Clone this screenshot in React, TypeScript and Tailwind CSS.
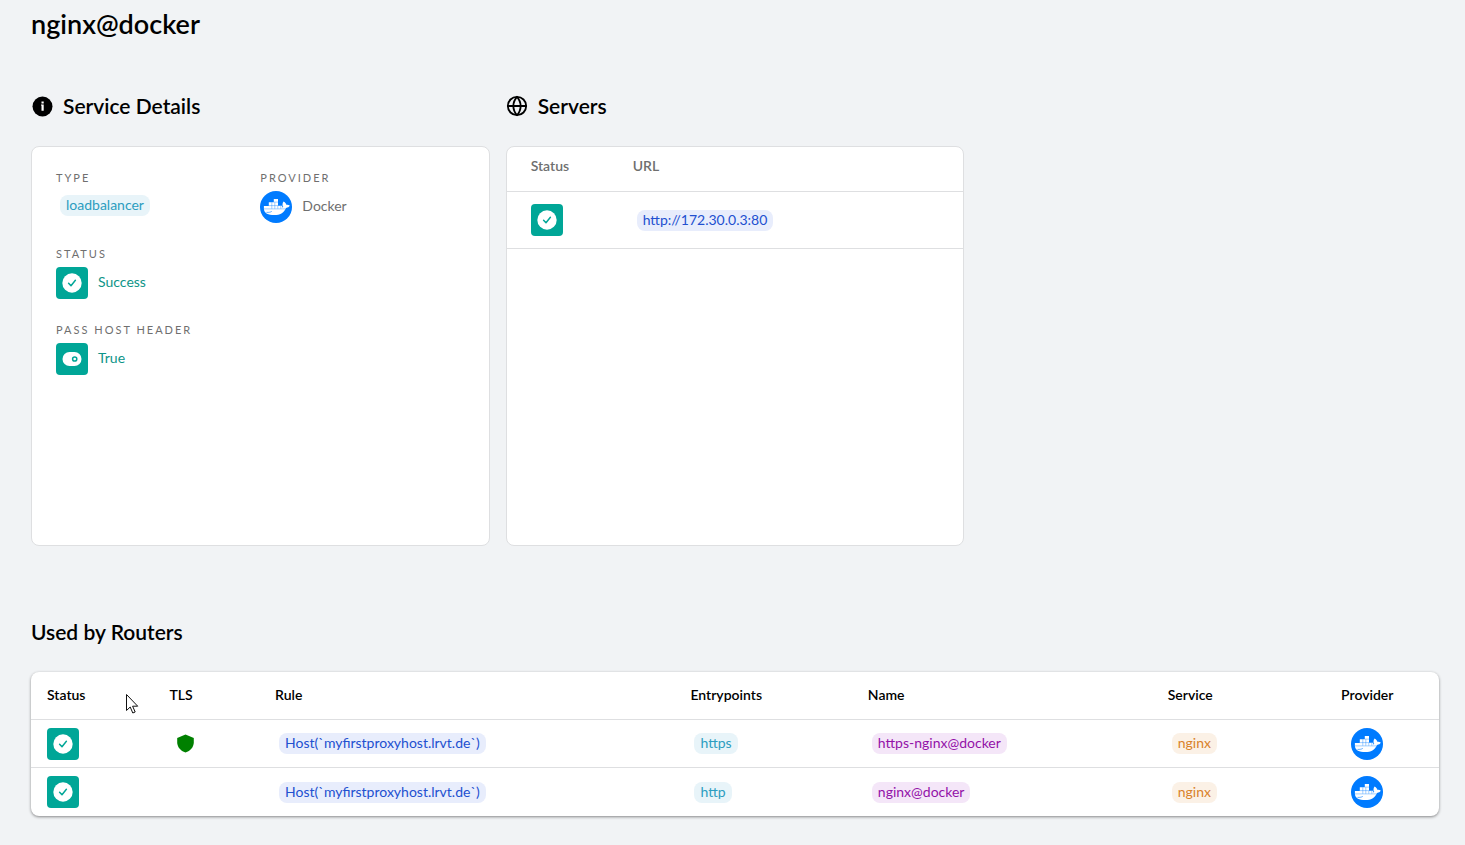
import React from 'react';
import { FiGlobe } from 'react-icons/fi';

interface Router {
    tls: boolean;
    rule: string;
    entrypoint: string;
    name: string;
    service: string;
}

const routers: Router[] = [
    { tls: true, rule: 'Host(`myfirstproxyhost.lrvt.de`)', entrypoint: 'https', name: 'https-nginx@docker', service: 'nginx' },
    { tls: false, rule: 'Host(`myfirstproxyhost.lrvt.de`)', entrypoint: 'http', name: 'nginx@docker', service: 'nginx' },
];

const badgeColors = {
    blue: 'bg-[#e8edfc] text-[#2250d0]',
    cyan: 'bg-[#e8f4f9] text-[#2c9dc0]',
    purple: 'bg-[#f4e6f8] text-[#9312a8]',
    orange: 'bg-[#fbf1e6] text-[#d9822b]',
};

const Badge: React.FC<{ color: keyof typeof badgeColors; children: React.ReactNode }> = ({ color, children }) => (
    <span className={`inline-block mx-1 px-1.5 h-[21px] leading-5 rounded-lg whitespace-nowrap ${badgeColors[color]}`}>
        {children}
    </span>
);

const StatusIcon: React.FC = () => (
    <span className="flex w-8 h-8 items-center justify-center rounded bg-[#00a697]">
        <svg width="20" height="20" viewBox="0 0 20 20" role="img" aria-label="Success">
            <circle cx="10" cy="10" r="9.7" fill="#fff" />
            <path d="M6.6 10.2 L9 12.7 L13.4 7.3" fill="none" stroke="#00a697" strokeWidth="1.5" strokeLinecap="round" strokeLinejoin="round" />
        </svg>
    </span>
);

const ToggleIcon: React.FC = () => (
    <span className="flex w-8 h-8 items-center justify-center rounded bg-[#00a697]">
        <svg width="20" height="20" viewBox="0 0 20 20" aria-hidden="true">
            <rect x="0.5" y="3" width="19" height="14" rx="7" fill="#fff" />
            <circle cx="12.7" cy="10" r="2.1" fill="none" stroke="#00a697" strokeWidth="1.5" />
        </svg>
    </span>
);

const DockerIcon: React.FC = () => (
    <svg width="32" height="32" viewBox="0 0 32 32" role="img" aria-label="Docker">
        <circle cx="16" cy="16" r="16" fill="#007bff" />
        <path
            d="M13.800 8h4.200v3.300v3.500h4.200v1.600c.4 0 .8-.2 1.100-.4-1.200-1.900-1-3.900.3-5.600 1.700 1 2.600 2.200 2.900 3.500 1.100-.2 2.200 0 3.300.7-.700 1.500-1.900 2.200-3.800 2.300-2.200 4.900-6 7.200-11.600 7.200-6.300 0-10.200-2-10.500-6.200V14.900h4.900v-3.600h5z"
            fill="#fff"
        />
        <path
            d="M8.800 14.600h9.400M13.800 11.100h4.200M4 17.900h21.500M11.800 11.300v6.400M14.800 11.300v6.400M17.800 14.800v2.900M20.800 14.800v2.900"
            fill="none"
            stroke="#007bff"
            strokeOpacity="0.75"
            strokeWidth="0.5"
        />
        <path d="M6.500 21.400c2.400.1 4-.2 5.300-1" fill="none" stroke="#007bff" strokeWidth="0.6" />
    </svg>
);

const Detail: React.FC<{ label: string; children: React.ReactNode }> = ({ label, children }) => (
    <div>
        <dt className="mb-1.5 text-[11px] leading-[14px] tracking-[2px] uppercase text-[#6f6f6f]">{label}</dt>
        <dd className="flex h-8 items-center gap-2.5">{children}</dd>
    </div>
);

const App: React.FC = () => (
    <main className="min-h-screen bg-[#f1f3f5] pl-[31px] pr-[26px] pb-7 font-['Lato','Noto_Sans',sans-serif] text-sm text-black">
        <h1 className="pt-2 text-[27px] leading-8 font-semibold">nginx@docker</h1>

        <div className="mt-[50px] grid grid-cols-3 gap-4">
            <section>
                <h2 className="flex h-8 items-center gap-2.5 text-[21px] leading-6 font-semibold">
                    <svg className="ml-px" width="21" height="21" viewBox="0 0 21 21" aria-hidden="true">
                        <circle cx="10.5" cy="10.5" r="10" />
                        <path d="M9.5 5.500h2.200v2H9.500zM9 8.500h2.700v6.200H9.500V9.500H9z" fill="#fff" />
                    </svg>
                    Service Details
                </h2>
                <dl className="mt-6 grid h-[400px] grid-cols-2 content-start gap-y-6 rounded-lg border border-[#dedfe1] bg-white p-6">
                    <Detail label="Type"><span className="pb-1"><Badge color="cyan">loadbalancer</Badge></span></Detail>
                    <Detail label="Provider"><DockerIcon /><span className="pb-0.5 text-[#6f6f6f]">Docker</span></Detail>
                    <div className="col-span-2">
                        <Detail label="Status"><StatusIcon /><span className="pb-0.5 text-[#0d9488]">Success</span></Detail>
                    </div>
                    <div className="col-span-2">
                        <Detail label="Pass Host Header"><ToggleIcon /><span className="pb-0.5 text-[#0d9488]">True</span></Detail>
                    </div>
                </dl>
            </section>

            <section>
                <h2 className="flex h-8 items-center gap-2.5 text-[21px] leading-6 font-semibold">
                    <FiGlobe size={22} />
                    Servers
                </h2>
                <div className="mt-6 h-[400px] rounded-lg border border-[#dedfe1] bg-white">
                    <table className="w-full border-separate border-spacing-0 text-left">
                        <thead>
                            <tr className="h-[45px] text-[#6f6f6f]">
                                <th className="w-[126px] border-b border-[#dedfe1] pl-6 pb-1.5 font-semibold">Status</th>
                                <th className="border-b border-[#dedfe1] pb-1.5 font-semibold">URL</th>
                            </tr>
                        </thead>
                        <tbody>
                            <tr className="h-[57px]">
                                <td className="border-b border-[#dedfe1] pl-6"><StatusIcon /></td>
                                <td className="border-b border-[#dedfe1]"><Badge color="blue">http://172.30.0.3:80</Badge></td>
                            </tr>
                        </tbody>
                    </table>
                </div>
            </section>
        </div>

        <h2 className="mt-[70px] text-[21px] leading-8 font-semibold">Used by Routers</h2>
        <div className="relative mt-6 rounded-lg bg-white shadow-[0_1px_3px_rgba(0,0,0,0.45)]">
            <table className="w-full table-fixed border-separate border-spacing-0 text-left">
                <thead>
                    <tr className="h-12 [&>th]:border-b [&>th]:border-[#dedfe1] [&>th]:pb-0.5 [&>th]:font-semibold">
                        <th className="w-[8.7%] pl-4">Status</th>
                        <th className="w-[7.5%] pl-4">TLS</th>
                        <th className="w-[29.5%] pl-4">Rule</th>
                        <th className="w-[12.6%] pl-4">Entrypoints</th>
                        <th className="w-[21.3%] pl-4">Name</th>
                        <th className="w-[12.2%] pl-4">Service</th>
                        <th className="pl-4 pr-11 text-center">Provider</th>
                    </tr>
                </thead>
                <tbody>
                    {routers.map((router) => (
                        <tr key={router.name} className="h-12 [&>td]:border-b [&>td]:border-[#dedfe1] last:[&>td]:border-b-0">
                            <td className="pl-4"><StatusIcon /></td>
                            <td className="pl-6">
                                {router.tls && (
                                    <svg width="17" height="19" viewBox="0 0 17 19" role="img" aria-label="TLS enabled">
                                        <path d="M8.500.500 16.800 4v4.200c0 4.600-3.300 8.800-8.300 10.300C3.500 17 .200 12.800.200 8.200V4z" fill="#008000" />
                                    </svg>
                                )}
                            </td>
                            <td className="pl-4"><Badge color="blue">{router.rule}</Badge></td>
                            <td className="pl-4"><Badge color="cyan">{router.entrypoint}</Badge></td>
                            <td className="pl-4"><Badge color="purple">{router.name}</Badge></td>
                            <td className="pl-4"><Badge color="orange">{router.service}</Badge></td>
                            <td className="pl-4 pr-11"><div className="flex justify-center"><DockerIcon /></div></td>
                        </tr>
                    ))}
                </tbody>
            </table>
            <svg className="pointer-events-none absolute left-[95px] top-[22px]" width="13" height="20" viewBox="0 0 13 20" aria-hidden="true">
                <path d="M.5.500v16l3.700-3.500 2.600 6 2.400-1-2.600-5.800h5.100z" fill="#fff" stroke="#111" />
            </svg>
        </div>
    </main>
);

export default App;
